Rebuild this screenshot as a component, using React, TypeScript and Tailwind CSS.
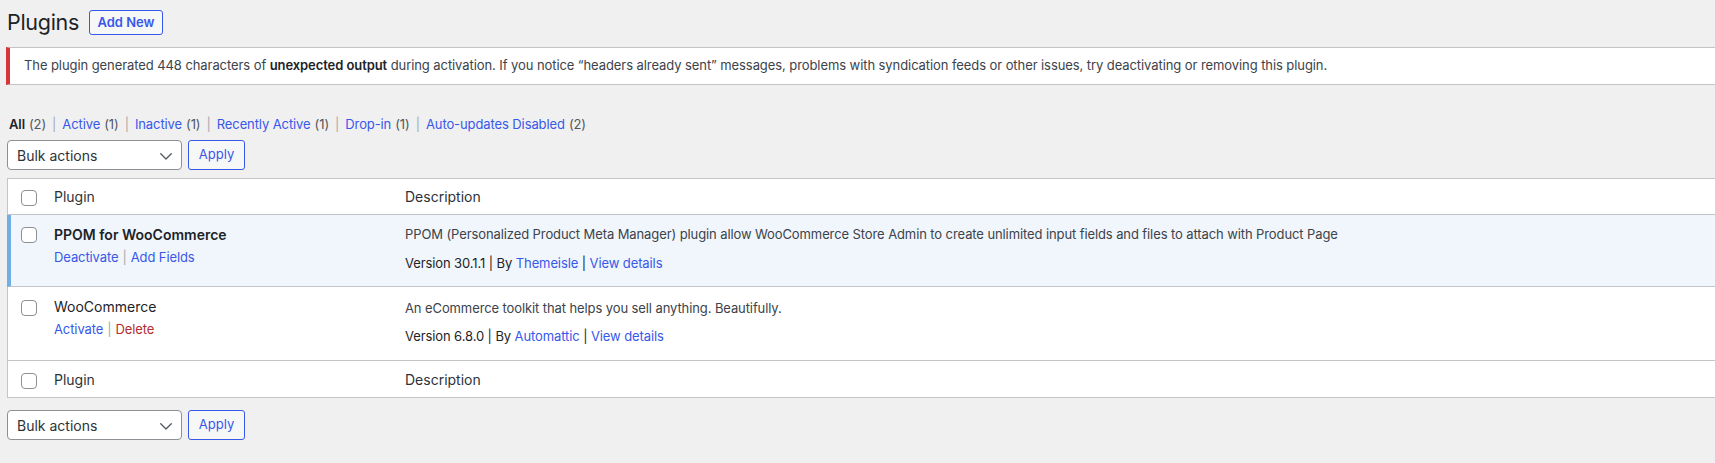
import React from "react";

const Checkbox = () => (
  <span className="block w-4 h-4 rounded-[4px] border border-[#8c8f94] bg-white" />
);

const BulkBar = () => (
  <div className="flex items-center gap-[6px] h-[30px]">
    <div className="relative w-[175px] h-[30px] rounded-[4px] border border-[#8c8f94] bg-white flex items-center pl-[9px] text-[14px] text-[#2c3338]">
      <span>Bulk actions</span>
      <svg className="absolute right-[9px] top-[12px]" width="12" height="7" viewBox="0 0 12 7" fill="none">
        <polyline points="0.75,0.75 6,6 11.25,0.75" stroke="#50575e" strokeWidth="1.3" strokeLinecap="round" strokeLinejoin="round" />
      </svg>
    </div>
    <button className="h-[30px] w-[57px] rounded-[3px] border border-[#3858e9] bg-[#f6f7f7] text-[13px] text-[#3858e9]">Apply</button>
  </div>
);

const Sep = () => <span className="mx-[6px] text-[#a7aaad]">|</span>;

export default function App() {
  return (
    <div
      className="w-full h-[463px] bg-[#f0f0f1] overflow-hidden text-[#3c434a]"
      style={{ fontFamily: "Inter, 'Liberation Sans', sans-serif" }}
    >
      <div className="pl-[6px] pt-[7px]">
        <div className="flex items-center h-[30px] pl-[1px]">
          <h1 className="text-[21.5px] leading-[30px] font-normal tracking-[-0.3px] text-[#1d2327]">Plugins</h1>
          <button className="ml-[10px] h-[25px] w-[74px] rounded-[3px] border border-[#3858e9] bg-[#f6f7f7] text-[13px] font-semibold text-[#3858e9] leading-none">
            Add New
          </button>
        </div>

        <div className="mt-[10px] w-[1740px] h-[38px] bg-white border border-[#c3c4c7] border-l-4 border-l-[#d63638] flex items-center pl-[14px] text-[13px] tracking-[-0.08px] text-[#3c434a]">
          <p>
            The plugin generated 448 characters of <strong className="font-semibold text-[#1d2327]">unexpected output</strong> during activation. If you notice “headers already sent” messages, problems with syndication feeds or other issues, try deactivating or removing this plugin.
          </p>
        </div>

        <div className="pl-[1px]">
          <div className="mt-[29px] h-[20px] leading-[20px] text-[13px] tracking-[-0.1px] text-[#50575e] flex items-center pl-[2px]">
            <span className="font-semibold text-[#1d2327]">All</span>
            <span className="ml-[4px]">(2)</span>
            <Sep />
            <span className="text-[#3858e9]">Active</span>
            <span className="ml-[4px]">(1)</span>
            <Sep />
            <span className="text-[#3858e9]">Inactive</span>
            <span className="ml-[4px]">(1)</span>
            <Sep />
            <span className="text-[#3858e9]">Recently Active</span>
            <span className="ml-[4px]">(1)</span>
            <Sep />
            <span className="text-[#3858e9]">Drop-in</span>
            <span className="ml-[4px]">(1)</span>
            <Sep />
            <span className="text-[#3858e9]">Auto-updates Disabled</span>
            <span className="ml-[4px]">(2)</span>
          </div>

          <div className="mt-[6px]">
            <BulkBar />
          </div>

          <div className="mt-[8px] w-[1740px] bg-white border-t border-r border-b border-[#c3c4c7]">
            {/* header */}
            <div className="flex h-[36px] border-b border-l border-[#c3c4c7] text-[14px] leading-[20px] text-[#2c3338]">
              <div className="w-[37px] shrink-0 pl-[13px] pt-[11px]"><Checkbox /></div>
              <div className="w-[350px] shrink-0 pl-[9px] pt-[8px]">Plugin</div>
              <div className="flex-1 pl-[10px] pt-[8px]">Description</div>
            </div>

            {/* PPOM active */}
            <div className="flex h-[72px] border-b border-[#c3c4c7] border-l-4 border-l-[#72aee6] bg-[#f0f6fc]">
              <div className="w-[34px] shrink-0 pl-[10px] pt-[12px]"><Checkbox /></div>
              <div className="w-[350px] shrink-0 pl-[9px] pt-[10px]">
                <div className="text-[14px] leading-[20px] font-semibold text-[#1d2327]">PPOM for WooCommerce</div>
                <div className="mt-[2px] text-[13px] tracking-[-0.1px] leading-[20px] flex items-center">
                  <span className="text-[#3858e9]">Deactivate</span>
                  <span className="mx-[4px] text-[#a7aaad]">|</span>
                  <span className="text-[#3858e9]">Add Fields</span>
                </div>
              </div>
              <div className="flex-1 pl-[10px] pt-[9px] text-[13px] tracking-[-0.1px] leading-[20px]">
                <p className="text-[#3c434a]">PPOM (Personalized Product Meta Manager) plugin allow WooCommerce Store Admin to create unlimited input fields and files to attach with Product Page</p>
                <p className="mt-[9px] text-[#1d2327]">
                  Version 30.1.1 | By <span className="text-[#3858e9]">Themeisle</span> | <span className="text-[#3858e9]">View details</span>
                </p>
              </div>
            </div>

            {/* WooCommerce inactive */}
            <div className="flex h-[74px] border-b border-l border-[#c3c4c7]">
              <div className="w-[37px] shrink-0 pl-[13px] pt-[13px]"><Checkbox /></div>
              <div className="w-[350px] shrink-0 pl-[9px] pt-[10px]">
                <div className="text-[14px] leading-[20px] text-[#1d2327]">WooCommerce</div>
                <div className="mt-[2px] text-[13px] tracking-[-0.1px] leading-[20px] flex items-center">
                  <span className="text-[#3858e9]">Activate</span>
                  <span className="mx-[4px] text-[#a7aaad]">|</span>
                  <span className="text-[#b32d2e]">Delete</span>
                </div>
              </div>
              <div className="flex-1 pl-[10px] pt-[11px] text-[13px] tracking-[-0.1px] leading-[20px]">
                <p className="text-[#3c434a]">An eCommerce toolkit that helps you sell anything. Beautifully.</p>
                <p className="mt-[8px] text-[#1d2327]">
                  Version 6.8.0 | By <span className="text-[#3858e9]">Automattic</span> | <span className="text-[#3858e9]">View details</span>
                </p>
              </div>
            </div>

            {/* footer */}
            <div className="flex h-[36px] border-l border-[#c3c4c7] text-[14px] leading-[20px] text-[#2c3338]">
              <div className="w-[37px] shrink-0 pl-[13px] pt-[12px]"><Checkbox /></div>
              <div className="w-[350px] shrink-0 pl-[9px] pt-[9px]">Plugin</div>
              <div className="flex-1 pl-[10px] pt-[9px]">Description</div>
            </div>
          </div>

          <div className="mt-[12px]">
            <BulkBar />
          </div>
        </div>
      </div>
    </div>
  );
}
